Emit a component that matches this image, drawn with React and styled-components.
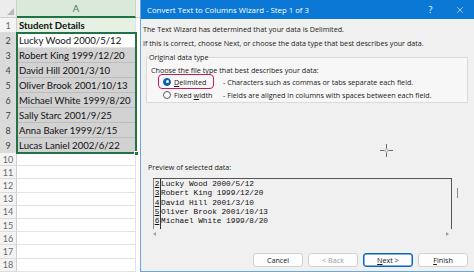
import styled, { createGlobalStyle } from 'styled-components'
import { X } from 'lucide-react'

const GlobalStyle = createGlobalStyle`
  html, body { margin: 0; padding: 0; background: #fff; overflow: hidden; }
  body { font-family: "Open Sans", "Noto Sans", sans-serif; }
  * { box-sizing: border-box; }
`

const students = [
  'Lucky Wood 2000/5/12',
  'Robert King 1999/12/20',
  'David Hill 2001/3/10',
  'Oliver Brook 2001/10/13',
  'Michael White 1999/8/20',
  'Sally Starc 2001/9/25',
  'Anna Baker 1999/2/15',
  'Lucas Laniel 2002/6/22',
]

const DATA_ROW = 15
const EMPTY_ROW = 13.2
const HEAD_ROW = 18

const Page = styled.div`
  display: flex;
  width: 474px;
  height: 272px;
  overflow: hidden;
`

/* ---------- spreadsheet ---------- */

const Sheet = styled.div`
  display: flex;
  width: 140px;
  flex-shrink: 0;
  background: #fff;
  font-family: Lato, "Liberation Sans", sans-serif;
`

const HeadColumn = styled.div`
  display: flex;
  flex-direction: column;
  width: 17px;
`

const Corner = styled.div`
  position: relative;
  height: ${HEAD_ROW}px;
  background: #ececec;
  border-right: 1px solid #cfcfcf;
  border-bottom: 1px solid #cfcfcf;
  &::after {
    content: '';
    position: absolute;
    right: 2px;
    bottom: 2px;
    border-left: 7px solid transparent;
    border-bottom: 7px solid #b8b8b8;
  }
`

const RowNum = styled.div`
  height: ${p => p.$h}px;
  display: flex;
  align-items: center;
  justify-content: center;
  font-size: 9px;
  color: ${p => (p.$selected ? '#3f3f3f' : '#6a6a6a')};
  background: ${p => (p.$selected ? '#dadada' : '#f4f4f4')};
  border-right: 1px solid ${p => (p.$selected ? '#217346' : '#cfcfcf')};
  border-bottom: 1px solid #dcdcdc;
`

const ColumnA = styled.div`
  display: flex;
  flex-direction: column;
  width: 119px;
`

const ColHead = styled.div`
  height: ${HEAD_ROW}px;
  display: flex;
  align-items: center;
  justify-content: center;
  font-size: 9.5px;
  color: #4d7a58;
  background: #dbe9da;
  border-bottom: 2px solid #217346;
  border-right: 1px solid #c8d6c8;
`

const Cell = styled.div`
  height: ${p => p.$h}px;
  display: flex;
  align-items: center;
  padding-left: 2px;
  font-size: 9.6px;
  color: #111;
  white-space: nowrap;
  font-weight: ${p => (p.$bold ? 700 : 400)};
  background: ${p => p.$bg || '#fff'};
  border-bottom: 1px solid ${p => (p.$bg === '#d2d2d2' ? '#bdbdbd' : '#e3e3e3')};
  border-right: 1px solid #e3e3e3;
`

const Selection = styled.div`
  position: relative;
  outline: 2px solid #217346;
  outline-offset: -1px;
  z-index: 1;
`

const FillHandle = styled.span`
  position: absolute;
  right: -3px;
  bottom: -3px;
  width: 5px;
  height: 5px;
  background: #217346;
  border: 1px solid #fff;
`

const SpareColumn = styled.div`
  flex: 1;
  display: flex;
  flex-direction: column;
`

const SpareHead = styled.div`
  height: ${HEAD_ROW}px;
  background: #f3f3f3;
  border-bottom: 1px solid #cfcfcf;
`

/* ---------- dialog ---------- */

const Dialog = styled.div`
  position: relative;
  flex: 1;
  height: 272px;
  display: flex;
  flex-direction: column;
  background: #f0f0f0;
  border-left: 1px solid #6aa6dd;
  border-bottom: 1px solid #6aa6dd;
  color: #1a1a1a;
  font-size: 7.2px;
`

const TitleBar = styled.div`
  height: 19px;
  flex-shrink: 0;
  display: flex;
  align-items: center;
  background: #0a78d4;
  color: #fff;
  padding-left: 6px;
`

const TitleText = styled.div`
  flex: 1;
  font-size: 7.8px;
`

const TitleButton = styled.div`
  width: 29px;
  height: 19px;
  display: flex;
  align-items: center;
  justify-content: center;
  font-size: 9px;
`

const Body = styled.div`
  flex: 1;
  display: flex;
  flex-direction: column;
  padding: 3px 0 0 2px;
`

const Line = styled.div`
  height: 14px;
  line-height: 14px;
  white-space: nowrap;
`

const Group = styled.fieldset`
  margin: 0 6px 0 3px;
  padding: 1px 0 0 2px;
  border: 1px solid #dadada;
  background: #f7f7f7;
  min-inline-size: auto;
  height: 53px;
`

const Legend = styled.legend`
  padding: 0;
  line-height: 14px;
`

const GroupLine = styled.div`
  height: 10px;
  line-height: 10px;
  padding-left: 2px;
  white-space: nowrap;
`

const OptionRow = styled.div`
  height: 13.5px;
  display: flex;
  align-items: center;
  padding-left: 9px;
  white-space: nowrap;
`

const OptionBox = styled.div`
  display: flex;
  align-items: center;
  gap: 3px;
  width: 56px;
  height: 15px;
  margin-right: 9px;
  padding-left: 4px;
  border: 1.5px solid ${p => (p.$marked ? '#c8195a' : 'transparent')};
  border-radius: 4px;
`

const Radio = styled.span`
  width: 8px;
  height: 8px;
  border-radius: 50%;
  flex-shrink: 0;
  background: ${p => (p.$checked ? '#0a5fb4' : '#fff')};
  border: 1px solid ${p => (p.$checked ? '#0a5fb4' : '#5c5c5c')};
  display: flex;
  align-items: center;
  justify-content: center;
  &::after {
    content: '';
    width: 3px;
    height: 3px;
    border-radius: 50%;
    background: ${p => (p.$checked ? '#fff' : 'transparent')};
  }
`

const Key = styled.span`
  text-decoration: underline;
`

const PreviewLabel = styled(Line)`
  margin-top: 57px;
  padding-left: 5px;
`

const Preview = styled.div`
  margin: 2px 12px 0 5px;
  height: 62px;
  display: grid;
  grid-template-columns: 1fr 9px;
  grid-template-rows: 1fr 9px;
`

const PreviewGrid = styled.div`
  margin: 2px 1px 0 5px;
  display: flex;
  border-top: 1px solid #555;
  border-right: 1px solid #555;
  font-family: "Liberation Mono", monospace;
  font-size: 7.75px;
  color: #111;
`

const NumColumn = styled.div`
  width: 8px;
  border-left: 1px solid #888;
  border-right: 1px solid #333;
  padding-top: 1px;
`

const NumCell = styled.div`
  height: 9.3px;
  line-height: 9.3px;
  text-align: center;
  text-decoration: underline;
`

const DataColumn = styled.div`
  flex: 1;
  padding-top: 1px;
`

const DataLine = styled.div`
  height: 9.3px;
  line-height: 9.3px;
  white-space: pre;
`

const VScroll = styled.div`
  display: flex;
  justify-content: center;
  padding-top: 12px;
  &::before {
    content: '';
    width: 1px;
    height: 10px;
    background: #8a8a8a;
  }
`

const HScroll = styled.div`
  display: flex;
  justify-content: space-between;
  align-items: center;
  padding: 0 4px 0 5px;
`

const Arrow = styled.span`
  width: 0;
  height: 0;
  border-top: 2.5px solid transparent;
  border-bottom: 2.5px solid transparent;
  border-left: ${p => (p.$right ? '3px solid #a0a0a0' : 'none')};
  border-right: ${p => (p.$right ? 'none' : '3px solid #a0a0a0')};
`

const ButtonRow = styled.div`
  display: flex;
  justify-content: flex-end;
  gap: 5px;
  margin-top: 15px;
  padding-right: 6px;
`

const Button = styled.div`
  width: 50px;
  height: 14px;
  display: flex;
  align-items: center;
  justify-content: center;
  background: #fdfdfd;
  border: 1px solid ${p => (p.$primary ? '#0a64c2' : '#d0d0d0')};
  box-shadow: ${p => (p.$primary ? 'inset 0 0 0 0.5px #0a64c2' : 'none')};
  border-radius: 3px;
  color: ${p => (p.$disabled ? '#a0a0a0' : '#1a1a1a')};
  font-size: 7.2px;
`

const Cursor = styled.svg`
  position: absolute;
  left: 239px;
  top: 144px;
`

function Crosshair() {
  return (
    <Cursor width="13" height="13" viewBox="0 0 13 13">
      <g stroke="#6b6b6b" strokeWidth="1">
        <line x1="6.5" y1="0" x2="6.5" y2="4.5" />
        <line x1="6.5" y1="8.5" x2="6.5" y2="13" />
        <line x1="0" y1="6.5" x2="4.5" y2="6.5" />
        <line x1="8.5" y1="6.5" x2="13" y2="6.5" />
      </g>
      <circle cx="6.5" cy="6.5" r="1.6" fill="none" stroke="#9a9a9a" strokeWidth="0.8" />
    </Cursor>
  )
}

export default function App() {
  const emptyRows = [10, 11, 12, 13, 14, 15, 16, 17, 18]
  return (
    <>
      <GlobalStyle />
      <Page>
        <Sheet>
          <HeadColumn>
            <Corner />
            <RowNum $h={DATA_ROW}>1</RowNum>
            {students.map((s, i) => (
              <RowNum key={s} $h={DATA_ROW} $selected>{i + 2}</RowNum>
            ))}
            {emptyRows.map(n => (
              <RowNum key={n} $h={EMPTY_ROW}>{n}</RowNum>
            ))}
          </HeadColumn>
          <ColumnA>
            <ColHead>A</ColHead>
            <Cell $h={DATA_ROW} $bold $bg="#e6f0e3">Student Details</Cell>
            <Selection>
              {students.map((s, i) => (
                <Cell key={s} $h={DATA_ROW} $bg={i === 0 ? '#fff' : '#d2d2d2'}>{s}</Cell>
              ))}
              <FillHandle />
            </Selection>
            {emptyRows.map(n => (
              <Cell key={n} $h={EMPTY_ROW} />
            ))}
          </ColumnA>
          <SpareColumn>
            <SpareHead />
          </SpareColumn>
        </Sheet>

        <Dialog>
          <TitleBar>
            <TitleText>Convert Text to Columns Wizard - Step 1 of 3</TitleText>
            <TitleButton>?</TitleButton>
            <TitleButton><X size={10} strokeWidth={1.4} /></TitleButton>
          </TitleBar>
          <Body>
            <Line>The Text Wizard has determined that your data is Delimited.</Line>
            <Line>If this is correct, choose Next, or choose the data type that best describes your data.</Line>
            <Group>
              <Legend>Original data type</Legend>
              <GroupLine>Choose the file type that best describes your data:</GroupLine>
              <OptionRow>
                <OptionBox $marked>
                  <Radio $checked />
                  <span><Key>D</Key>elimited</span>
                </OptionBox>
                - Characters such as commas or tabs separate each field.
              </OptionRow>
              <OptionRow>
                <OptionBox>
                  <Radio />
                  <span>Fixed <Key>w</Key>idth</span>
                </OptionBox>
                - Fields are aligned in columns with spaces between each field.
              </OptionRow>
            </Group>

            <PreviewLabel>Preview of selected data:</PreviewLabel>
            <Preview>
              <PreviewGrid>
                <NumColumn>
                  {[2, 3, 4, 5, 6].map(n => <NumCell key={n}>{n}</NumCell>)}
                </NumColumn>
                <DataColumn>
                  {students.slice(0, 5).map(s => <DataLine key={s}>{s}</DataLine>)}
                </DataColumn>
              </PreviewGrid>
              <VScroll />
              <HScroll><Arrow /><Arrow $right /></HScroll>
            </Preview>

            <ButtonRow>
              <Button>Cancel</Button>
              <Button $disabled>&lt; Back</Button>
              <Button $primary><span><Key>N</Key>ext &gt;</span></Button>
              <Button><span><Key>F</Key>inish</span></Button>
            </ButtonRow>
          </Body>
          <Crosshair />
        </Dialog>
      </Page>
    </>
  )
}
